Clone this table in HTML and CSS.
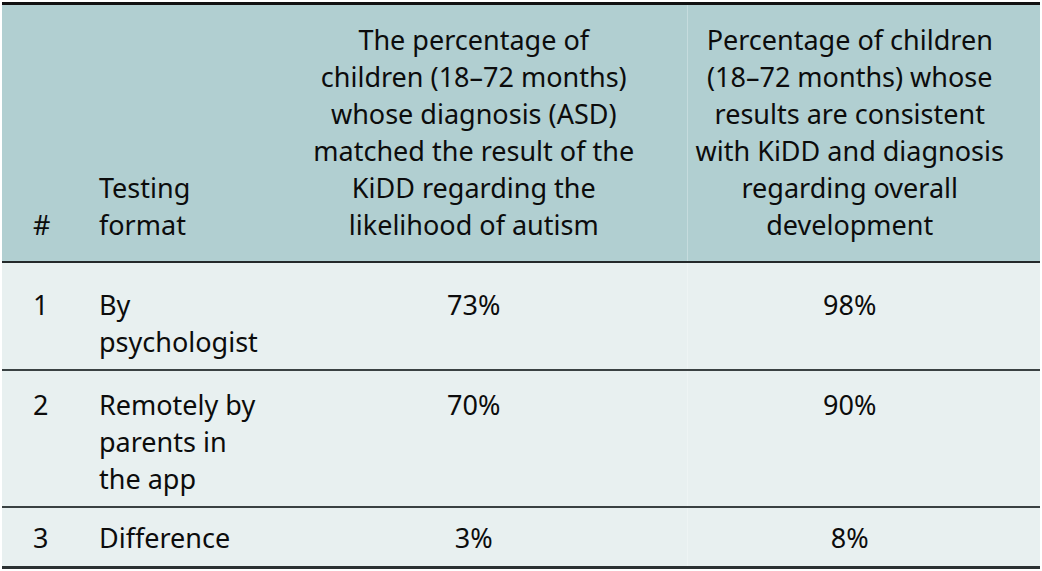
FILE: index.html
```html
<!DOCTYPE html>
<html lang="en">
<head>
<meta charset="utf-8">
<title>KiDD results</title>
<link rel="stylesheet" href="styles.css">
</head>
<body>
<table class="results">
  <colgroup>
    <col class="c-num">
    <col class="c-format">
    <col class="c-asd">
    <col class="c-dev">
  </colgroup>
  <thead>
    <tr>
      <th class="num">#</th>
      <th class="format">Testing format</th>
      <th class="asd">The percentage of children (18–72 months) whose diagnosis (ASD) matched the result of the KiDD regarding the likelihood of autism</th>
      <th class="dev">Percentage of children (18–72 months) whose results are consistent with KiDD and diagnosis regarding overall development</th>
    </tr>
  </thead>
  <tbody>
    <tr class="row-first">
      <td class="num">1</td>
      <td class="format">By psychologist</td>
      <td class="asd">73%</td>
      <td class="dev">98%</td>
    </tr>
    <tr class="row-mid">
      <td class="num">2</td>
      <td class="format">Remotely by parents in the app</td>
      <td class="asd">70%</td>
      <td class="dev">90%</td>
    </tr>
    <tr class="row-last">
      <td class="num">3</td>
      <td class="format">Difference</td>
      <td class="asd">3%</td>
      <td class="dev">8%</td>
    </tr>
  </tbody>
</table>
</body>
</html>
```
FILE: styles.css
```css
html, body {
  margin: 0;
  padding: 0;
  background: #ffffff;
}

body {
  padding: 2px 2px 0 2px;
}

.results {
  width: 1038px;
  table-layout: fixed;
  border-collapse: collapse;
  font-family: "Noto Sans", "Open Sans", sans-serif;
  font-size: 27px;
  line-height: 37px;
  color: #0c0c0c;
  border-top: 3px solid #111111;
  border-bottom: 3px solid #2b3132;
}

.c-num { width: 83px; }
.c-format { width: 203px; }
.c-asd { width: 399px; }
.c-dev { width: 353px; }

.results th,
.results td {
  font-weight: normal;
  vertical-align: top;
}

.results thead th {
  background: #b1cfd1;
  vertical-align: bottom;
  padding-top: 16px;
  padding-bottom: 18px;
  border-bottom: 2px solid #23292a;
}

.results tbody td {
  background: #e8f0f0;
  border-bottom: 2px solid #3a4142;
}

.results tbody tr.row-last td {
  border-bottom: none;
}

.row-first td { padding-top: 23px; padding-bottom: 9px; }
.row-mid td { padding-top: 15px; padding-bottom: 9px; }
.row-last td { padding-top: 11px; padding-bottom: 10px; }

.num {
  text-align: left;
  padding-left: 31px;
  padding-right: 4px;
}

.format {
  text-align: left;
  padding-left: 14px;
  padding-right: 14px;
}

.asd {
  text-align: center;
  padding-left: 16px;
  padding-right: 43px;
}

.dev {
  text-align: center;
  padding-left: 2px;
  padding-right: 30px;
  border-left: 1px solid rgba(255, 255, 255, 0.28);
}
```
